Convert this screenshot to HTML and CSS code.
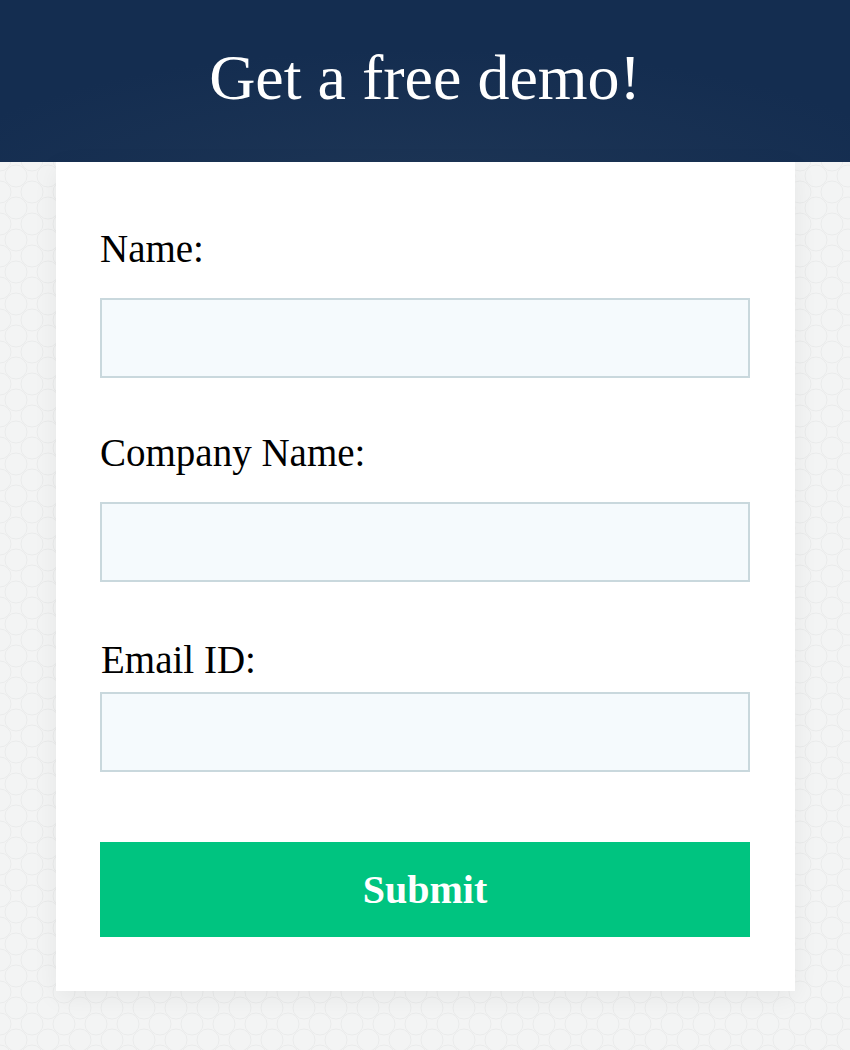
FILE: index.html
```html
<!DOCTYPE html>
<html lang="en">
<head>
  <meta charset="UTF-8" />
  <meta name="viewport" content="width=device-width, initial-scale=1.0" />
  <title>Get a free demo</title>
  <link rel="stylesheet" href="styles.css">
</head>
<body>
  <header class="banner">
    <h1>Get a free demo!</h1>
  </header>
  <form class="demo-card" onsubmit="return false;">
    <label class="field-label label-name" for="name">Name:</label>
    <input class="field-input" type="text" id="name">
    <label class="field-label label-company" for="company">Company Name:</label>
    <input class="field-input" type="text" id="company">
    <label class="field-label label-email" for="email">Email ID:</label>
    <input class="field-input" type="email" id="email">
    <button class="submit-btn" type="submit">Submit</button>
  </form>
</body>
</html>
```

FILE: styles.css
```css
body {
  margin: 0;
  min-height: 1050px;
  font-family: "Liberation Serif", "Times New Roman", serif;
  background-color: #f3f4f4;
  background-image: url("data:image/svg+xml,%3Csvg xmlns='http://www.w3.org/2000/svg' width='32' height='32'%3E%3Cg fill='none' stroke='%23eaebeb' stroke-width='1'%3E%3Ccircle cx='0' cy='0' r='11'/%3E%3Ccircle cx='32' cy='0' r='11'/%3E%3Ccircle cx='0' cy='32' r='11'/%3E%3Ccircle cx='32' cy='32' r='11'/%3E%3Ccircle cx='16' cy='16' r='11'/%3E%3C/g%3E%3C/svg%3E");
}
.banner {
  height: 162px;
  box-sizing: border-box;
  padding-top: 46px;
  text-align: center;
  background: radial-gradient(ellipse 60% 90% at 50% 120%, #1e3656 0%, #142d50 100%);
  color: #fff;
}
.banner h1 {
  margin: 0;
  font-size: 64px;
  line-height: 64px;
  font-weight: normal;
}
.demo-card {
  display: flex;
  flex-direction: column;
  width: 739px;
  box-sizing: border-box;
  margin-left: 56px;
  padding: 67px 45px 54px 44px;
  background: #fff;
  box-shadow: 0 6px 24px rgba(0, 0, 0, 0.06);
}
.field-label {
  font-size: 39px;
  line-height: 39px;
  color: #000;
}
.label-name {
  margin-bottom: 30px;
}
.label-company {
  margin-top: 55px;
  margin-bottom: 30px;
}
.label-email {
  margin-top: 58px;
  margin-bottom: 13px;
  padding-left: 1px;
}
.field-input {
  height: 80px;
  box-sizing: border-box;
  margin: 0;
  border: 2px solid #c9d8dd;
  background: #f5fafd;
  font-family: inherit;
  font-size: 24px;
  padding: 0 14px;
  outline: none;
}
.submit-btn {
  margin-top: 70px;
  height: 95px;
  border: none;
  background: #00c480;
  color: #fff;
  font-family: inherit;
  font-size: 40px;
  font-weight: bold;
  line-height: 40px;
  cursor: pointer;
}
```
